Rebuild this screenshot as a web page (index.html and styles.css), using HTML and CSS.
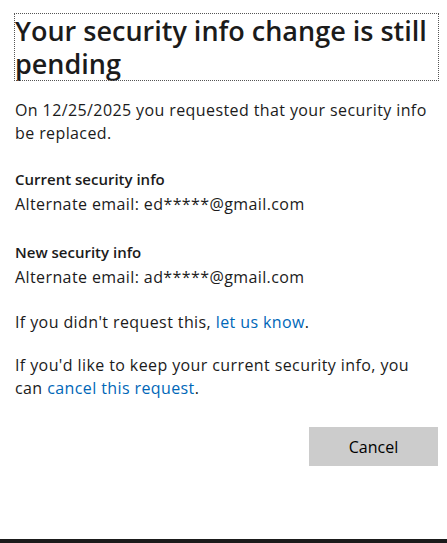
FILE: index.html
```html
<!DOCTYPE html>
<html lang="en">
<head>
<meta charset="utf-8">
<title>Security info change pending</title>
<link rel="stylesheet" href="styles.css">
</head>
<body>
<main class="content">
  <h1 class="title" tabindex="-1">Your security info change is still pending</h1>
  <p class="text intro">On 12/25/2025 you requested that your security info be replaced.</p>
  <div class="info">
    <div class="info-label">Current security info</div>
    <div class="text">Alternate email: ed*****@gmail.com</div>
  </div>
  <div class="info info-last">
    <div class="info-label">New security info</div>
    <div class="text">Alternate email: ad*****@gmail.com</div>
  </div>
  <p class="text">If you didn't request this, <a class="link" href="#">let us know</a>.</p>
  <p class="text">If you'd like to keep your current security info, you can <a class="link" href="#">cancel this request</a>.</p>
  <div class="actions">
    <button class="btn" type="button">Cancel</button>
  </div>
</main>
<footer class="footer-bar"></footer>
</body>
</html>
```
FILE: styles.css
```css
html, body {
  margin: 0;
  padding: 0;
  background: #ffffff;
}
body {
  min-height: 100vh;
  display: flex;
  flex-direction: column;
  font-family: "Open Sans", "Noto Sans", sans-serif;
  color: #1b1b1b;
}
.content {
  padding: 14px 9px 0 15px;
}
.title {
  margin: 0 0 19px 0;
  font-size: 27px;
  font-weight: 600;
  line-height: 33px;
  outline: 1px dotted #555;
}
.text {
  margin: 0;
  font-size: 16px;
  line-height: 23px;
  letter-spacing: 0.4px;
}
p.text {
  margin: 0 0 20px 0;
}
p.intro {
  margin-bottom: 22px;
}
.info {
  margin: 0 0 24px 0;
}
.info-last {
  margin-bottom: 22px;
}
.info-label {
  font-size: 15px;
  font-weight: 600;
  line-height: 24px;
  margin-bottom: 2px;
}
.link {
  color: #0067b8;
  text-decoration: none;
}
.actions {
  display: flex;
  justify-content: flex-end;
  margin-top: 27px;
}
.btn {
  width: 129px;
  height: 39px;
  border: none;
  background: #cccccc;
  color: #000;
  font-family: inherit;
  font-size: 16px;
  padding: 0;
}
.footer-bar {
  margin-top: auto;
  height: 4px;
  background: #1b1b1b;
}
```
